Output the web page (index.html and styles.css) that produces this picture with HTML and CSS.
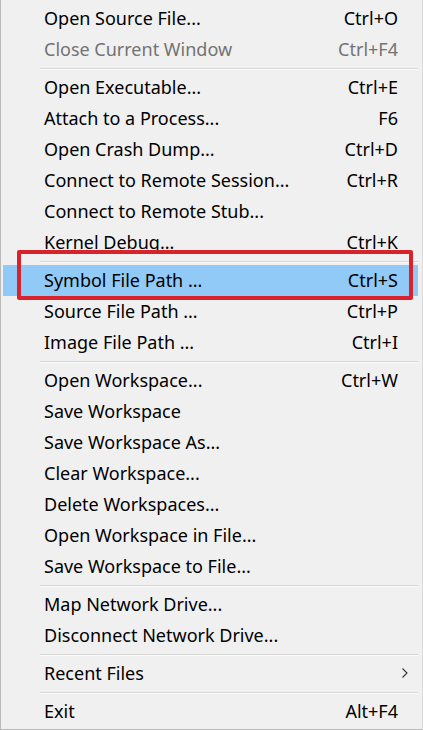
FILE: index.html
```html
<!DOCTYPE html>
<html>
<head>
<meta charset="utf-8">
<link rel="stylesheet" href="styles.css">
</head>
<body>
<div class="menu">
  <div class="item"><span class="label">Open Source File...</span><span class="key">Ctrl+O</span></div>
  <div class="item disabled"><span class="label">Close Current Window</span><span class="key">Ctrl+F4</span></div>
  <div class="sep"></div>
  <div class="item"><span class="label">Open Executable...</span><span class="key">Ctrl+E</span></div>
  <div class="item"><span class="label">Attach to a Process...</span><span class="key">F6</span></div>
  <div class="item"><span class="label">Open Crash Dump...</span><span class="key">Ctrl+D</span></div>
  <div class="item"><span class="label">Connect to Remote Session...</span><span class="key">Ctrl+R</span></div>
  <div class="item"><span class="label">Connect to Remote Stub...</span><span class="key"></span></div>
  <div class="item"><span class="label">Kernel Debug...</span><span class="key">Ctrl+K</span></div>
  <div class="sep"></div>
  <div class="item selected"><span class="label">Symbol File Path ...</span><span class="key">Ctrl+S</span><div class="redbox"></div></div>
  <div class="item"><span class="label">Source File Path ...</span><span class="key">Ctrl+P</span></div>
  <div class="item"><span class="label">Image File Path ...</span><span class="key">Ctrl+I</span></div>
  <div class="sep"></div>
  <div class="item"><span class="label">Open Workspace...</span><span class="key">Ctrl+W</span></div>
  <div class="item"><span class="label">Save Workspace</span><span class="key"></span></div>
  <div class="item"><span class="label">Save Workspace As...</span><span class="key"></span></div>
  <div class="item"><span class="label">Clear Workspace...</span><span class="key"></span></div>
  <div class="item"><span class="label">Delete Workspaces...</span><span class="key"></span></div>
  <div class="item"><span class="label">Open Workspace in File...</span><span class="key"></span></div>
  <div class="item"><span class="label">Save Workspace to File...</span><span class="key"></span></div>
  <div class="sep"></div>
  <div class="item"><span class="label">Map Network Drive...</span><span class="key"></span></div>
  <div class="item"><span class="label">Disconnect Network Drive...</span><span class="key"></span></div>
  <div class="sep"></div>
  <div class="item submenu"><span class="label">Recent Files</span><span class="arrow"><svg width="8" height="12" viewBox="0 0 8 12"><path d="M1.5 1.5 L6 6 L1.5 10.5" fill="none" stroke="#333" stroke-width="1.1"/></svg></span></div>
  <div class="sep"></div>
  <div class="item"><span class="label">Exit</span><span class="key">Alt+F4</span></div>
</div>
</body>
</html>
```

FILE: styles.css
```css
html, body {
  margin: 0;
  padding: 0;
  background: #f0f0f0;
}
.menu {
  box-sizing: border-box;
  width: 423px;
  height: 730px;
  background: #f0f0f0;
  border-left: 1px solid #b9b9b9;
  border-bottom: 1px solid #b9b9b9;
  border-right: 1px solid #dadada;
  padding: 3px 4px 0 2px;
  display: flex;
  flex-direction: column;
  font-family: "Noto Sans", "Open Sans", sans-serif;
  font-size: 18px;
  color: #000;
}
.item {
  position: relative;
  box-sizing: border-box;
  height: 31px;
  flex: 0 0 31px;
  display: flex;
  align-items: center;
  justify-content: space-between;
  padding: 0 20px 2px 41px;
  white-space: nowrap;
}
.item.disabled {
  color: #737373;
}
.item.selected {
  background: #91c9f7;
}
.sep {
  flex: 0 0 7px;
  height: 7px;
  margin-left: 37px;
  display: flex;
  align-items: center;
}
.sep::before {
  content: "";
  display: block;
  width: 100%;
  height: 1px;
  background: #d7d7d7;
  box-shadow: 0 1px 0 #fafafa;
}
.arrow {
  display: flex;
  align-items: center;
  margin-right: -11px;
}
.redbox {
  position: absolute;
  left: 14px;
  top: -15px;
  width: 396px;
  height: 50px;
  box-sizing: border-box;
  border: 4px solid #d9232c;
  border-radius: 2px;
}
```
